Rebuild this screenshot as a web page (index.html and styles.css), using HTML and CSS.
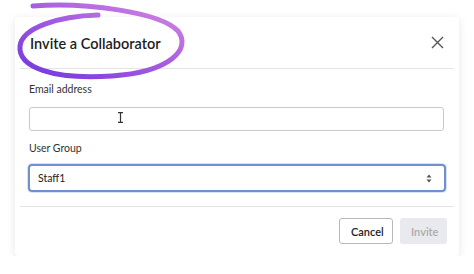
FILE: index.html
```html
<!DOCTYPE html>
<html lang="en">
<head>
    <meta charset="UTF-8">
    <title>Invite a Collaborator</title>
    <link rel="stylesheet" href="styles.css">
</head>
<body>
    <div class="page">
        <div class="modal">
            <div class="modal-header">
                <h2 class="modal-title">Invite a Collaborator</h2>
                <button class="close-button" aria-label="Close">
                    <svg width="13" height="13" viewBox="0 0 13 13"><path d="M1 1L12 12M12 1L1 12" stroke="#555" stroke-width="1.4" fill="none"/></svg>
                </button>
            </div>
            <div class="modal-body">
                <label class="field-label">Email address</label>
                <div class="input-wrap">
                    <div class="text-input"></div>
                    <svg class="ibeam" width="7" height="11" viewBox="0 0 7 11"><path d="M1 0.7H6M1 10.3H6M3.5 0.7V10.3" stroke="#333" stroke-width="1.2" fill="none"/></svg>
                </div>
                <label class="field-label second">User Group</label>
                <div class="select-input">
                    <span>Staff1</span>
                    <svg width="6" height="9" viewBox="0 0 6 9"><path d="M3 0.5L5.5 3.5H0.5Z M3 8.5L5.5 5.5H0.5Z" fill="#555"/></svg>
                </div>
            </div>
            <div class="modal-footer">
                <button class="btn btn-cancel">Cancel</button>
                <button class="btn btn-invite">Invite</button>
            </div>
        </div>
        <svg class="scribble" width="200" height="85" viewBox="0 0 200 85">
            <defs>
                <linearGradient id="ink" x1="0" y1="1" x2="1" y2="0">
                    <stop offset="0" stop-color="#7136e0"/>
                    <stop offset="0.55" stop-color="#a95ee0"/>
                    <stop offset="1" stop-color="#d588e2"/>
                </linearGradient>
            </defs>
            <path d="M33 6 C 85 2, 160 12, 178 31 C 192 49, 170 72, 112 76 C 52 80, 18 67, 20 46 C 22 28, 58 16, 98 15" stroke="url(#ink)" stroke-width="5" stroke-linecap="round" fill="none"/>
        </svg>
    </div>
</body>
</html>
```

FILE: styles.css
```css
body {
    margin: 0;
    background-color: #fff;
    font-family: Lato, "Noto Sans", sans-serif;
    color: #222;
}

.page {
    position: relative;
    padding: 17px 15px 0 15px;
}

.modal {
    width: 434px;
    height: 239px;
    padding: 0 5px;
    background: #fff;
    border-radius: 4px;
    box-shadow: 0 2px 10px rgba(0, 0, 0, 0.1);
    display: flex;
    flex-direction: column;
}

.modal-header {
    height: 51px;
    border-bottom: 1px solid #e4e4e4;
    display: flex;
    align-items: center;
    justify-content: space-between;
    padding: 0 10px 0 10px;
}

.modal-title {
    margin: 0;
    font-size: 14.5px;
    font-weight: 600;
    color: #1d1d1d;
    padding-top: 1px;
}

.close-button {
    background: none;
    border: none;
    padding: 0;
    width: 13px;
    height: 13px;
    display: flex;
    cursor: pointer;
}

.modal-body {
    height: 137px;
    border-bottom: 1px solid #e4e4e4;
    padding: 0 10px 0 9px;
    display: flex;
    flex-direction: column;
}

.field-label {
    display: block;
    font-size: 10.5px;
    color: #333;
    margin-top: 14px;
    height: 24px;
}

.field-label.second {
    margin-top: 11px;
    height: 22px;
}

.input-wrap {
    position: relative;
}

.text-input {
    height: 22px;
    border: 1px solid #c9c9c9;
    border-radius: 3px;
}

.ibeam {
    position: absolute;
    left: 88px;
    top: 5px;
}

.select-input {
    height: 24px;
    margin: 0 -2px 0 -1px;
    border: 2px solid #6f8fd0;
    border-radius: 4px;
    box-shadow: 0 0 0 1px rgba(111, 143, 208, 0.25);
    display: flex;
    align-items: center;
    justify-content: space-between;
    padding: 0 12px 0 8px;
    font-size: 10.5px;
    color: #222;
}

.modal-footer {
    flex: 1;
    display: flex;
    justify-content: flex-end;
    align-items: flex-start;
    gap: 7px;
    padding: 11px 7px 0 0;
}

.btn {
    height: 26px;
    font-family: Lato, "Noto Sans", sans-serif;
    font-size: 11px;
    font-weight: 600;
    border-radius: 3px;
    padding: 0 11px;
}

.btn-cancel {
    background: #fff;
    border: 1px solid #b8b8b8;
    color: #222;
    width: 54px;
}

.btn-invite {
    background: #e9eaed;
    border: none;
    color: #a9abb0;
    width: 47px;
}

.scribble {
    position: absolute;
    left: 0;
    top: 0;
}
```
